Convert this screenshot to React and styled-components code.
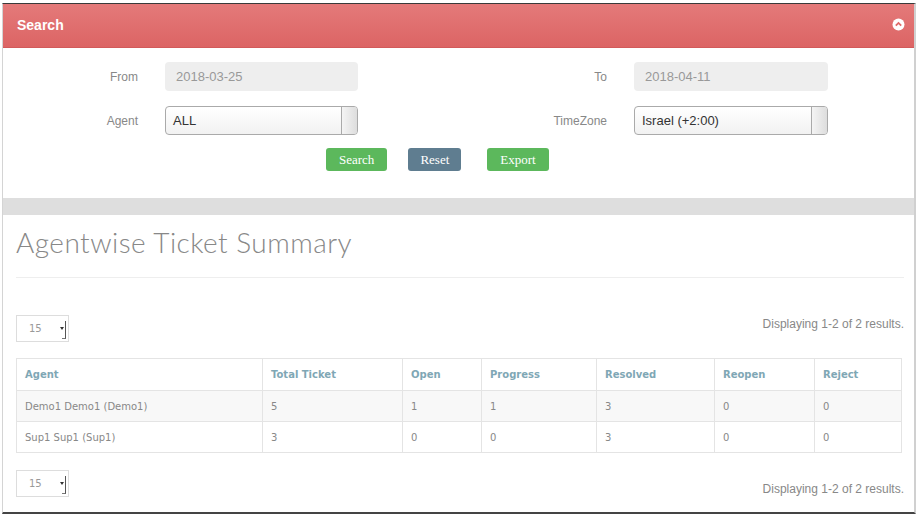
import React from 'react';
import styled, { createGlobalStyle } from 'styled-components';

const GlobalStyle = createGlobalStyle`
  html, body {
    margin: 0;
    padding: 0;
    background: #fff;
  }
  body {
    font-family: "Liberation Sans", Arial, sans-serif;
  }
`;

const rows = [
  { agent: 'Demo1 Demo1 (Demo1)', total: 5, open: 1, progress: 1, resolved: 3, reopen: 0, reject: 0 },
  { agent: 'Sup1 Sup1 (Sup1)', total: 3, open: 0, progress: 0, resolved: 3, reopen: 0, reject: 0 },
];

const columns = [
  { key: 'agent', label: 'Agent', width: 246 },
  { key: 'total', label: 'Total Ticket', width: 140 },
  { key: 'open', label: 'Open', width: 79 },
  { key: 'progress', label: 'Progress', width: 115 },
  { key: 'resolved', label: 'Resolved', width: 118 },
  { key: 'reopen', label: 'Reopen', width: 100 },
  { key: 'reject', label: 'Reject', width: 87 },
];

function PageSize () {
  return (
    <SizeBox>
      <SizeText>15</SizeText>
      <SizeArrow />
    </SizeBox>
  );
}

function Pager ({ bottom }) {
  return (
    <PagerRow $bottom={bottom}>
      <PageSize />
      <Summary>Displaying 1-2 of 2 results.</Summary>
    </PagerRow>
  );
}

export default function App () {
  return (
    <>
      <GlobalStyle />
      <Frame>
        <SearchPanel>
          <PanelHeader>
            <span>Search</span>
            <CollapseIcon>
              <svg width="13" height="13" viewBox="0 0 13 13">
                <circle cx="6.5" cy="6.5" r="6" fill="#fff" />
                <path d="M3.8 7.6 L6.5 4.9 L9.2 7.6" stroke="#e06a6a" strokeWidth="1.8" fill="none" />
              </svg>
            </CollapseIcon>
          </PanelHeader>
          <PanelBody>
            <FieldGrid>
              <Label>From</Label>
              <DateInput>2018-03-25</DateInput>
              <Label>To</Label>
              <DateInput>2018-04-11</DateInput>
              <span />
              <Label>Agent</Label>
              <Select>
                <span>ALL</span>
                <SelectButton />
              </Select>
              <Label>TimeZone</Label>
              <Select>
                <span>Israel (+2:00)</span>
                <SelectButton />
              </Select>
              <span />
            </FieldGrid>
            <ButtonRow>
              <Button $color="#5cb85c">Search</Button>
              <Button $color="#5f7d90" $pad="12px">Reset</Button>
              <Button $color="#5cb85c" $gap="5px">Export</Button>
            </ButtonRow>
          </PanelBody>
        </SearchPanel>
        <Band />
        <ResultPanel>
          <Title>Agentwise Ticket Summary</Title>
          <Rule />
          <Pager />
          <Table>
            <colgroup>
              {columns.map((c) => <col key={c.key} style={{ width: c.width }} />)}
            </colgroup>
            <thead>
              <tr>
                {columns.map((c) => <Th key={c.key}>{c.label}</Th>)}
              </tr>
            </thead>
            <tbody>
              {rows.map((r, i) => (
                <Tr key={r.agent} $striped={i % 2 === 0}>
                  {columns.map((c) => <Td key={c.key}>{r[c.key]}</Td>)}
                </Tr>
              ))}
            </tbody>
          </Table>
          <Pager bottom />
        </ResultPanel>
      </Frame>
    </>
  );
}

const Frame = styled.div`
  margin-top: 3px;
  width: 914px;
  height: 511px;
  border-top: 1px solid #3a3a3a;
  border-bottom: 2px solid #444;
  border-left: 1px solid #d4d4d4;
  border-right: 2px solid #d0d0d0;
  margin-left: 2px;
  display: flex;
  flex-direction: column;
  box-sizing: border-box;
`;

const SearchPanel = styled.div`
  flex-shrink: 0;
  background: #fff;
`;

const PanelHeader = styled.div`
  height: 41px;
  background: linear-gradient(#e47a7a, #dc6464);
  color: #fff;
  font-size: 14px;
  font-weight: bold;
  display: flex;
  align-items: center;
  justify-content: space-between;
  padding: 0 9px 2px 14px;
  border-bottom: 1px solid #d25a5a;
`;

const CollapseIcon = styled.span`
  display: flex;
  align-items: center;
`;

const PanelBody = styled.div`
  padding: 14px 0 27px 1px;
`;

const FieldGrid = styled.div`
  display: grid;
  grid-template-columns: 134px 193px 222px 194px 1fr;
  column-gap: 27px;
  row-gap: 15px;
  align-items: center;
`;

const Label = styled.span`
  text-align: right;
  color: #888;
  font-size: 12px;
`;

const DateInput = styled.div`
  height: 29px;
  box-sizing: border-box;
  background: #eee;
  border-radius: 4px;
  color: #999;
  font-size: 13px;
  display: flex;
  align-items: center;
  padding-left: 11px;
`;

const Select = styled.div`
  height: 29px;
  box-sizing: border-box;
  border: 1px solid #aaa;
  border-radius: 4px;
  background: linear-gradient(#fff, #f2f2f2);
  color: #333;
  font-size: 13px;
  display: flex;
  align-items: center;
  justify-content: space-between;
  padding-left: 7px;
  overflow: hidden;
`;

const SelectButton = styled.span`
  width: 15px;
  align-self: stretch;
  border-left: 1px solid #aaa;
  background: linear-gradient(to right, #f4f4f4, #ddd);
`;

const ButtonRow = styled.div`
  display: flex;
  gap: 21px;
  padding-left: 322px;
  margin-top: 13px;
`;

const Button = styled.button`
  height: 23px;
  padding: 0 ${(p) => p.$pad || '13px'};
  border: none;
  border-radius: 3px;
  background: ${(p) => p.$color};
  color: #fff;
  font-family: "Liberation Serif", "Times New Roman", serif;
  font-size: 13px;
  margin-left: ${(p) => p.$gap || '0'};
`;

const Band = styled.div`
  flex-shrink: 0;
  height: 17px;
  background: #dedede;
`;

const ResultPanel = styled.div`
  flex: 1;
  min-height: 0;
  overflow: hidden;
  padding: 0 10px 0 13px;
  background: #fff;
`;

const Title = styled.h1`
  margin: 12px 0 0;
  font-family: Lato, "Open Sans", sans-serif;
  font-weight: 300;
  font-size: 28px;
  letter-spacing: 0.45px;
  color: #888;
  line-height: 30px;
`;

const Rule = styled.hr`
  border: none;
  border-top: 1px solid #eee;
  margin: 20px 0 37px;
`;

const PagerRow = styled.div`
  display: flex;
  justify-content: space-between;
  align-items: ${(p) => (p.$bottom ? 'flex-end' : 'flex-start')};
  margin-bottom: 16px;
`;

const SizeBox = styled.div`
  width: 53px;
  height: 27px;
  box-sizing: border-box;
  border: 1px solid #ddd;
  position: relative;
  display: flex;
  align-items: center;
  padding-left: 12px;
`;

const SizeText = styled.span`
  font-family: "DejaVu Sans", sans-serif;
  font-size: 10px;
  color: #999;
`;

const SizeArrow = styled.span`
  position: absolute;
  right: 2px;
  bottom: 2px;
  width: 3px;
  height: 17px;
  border-right: 1.5px solid #555;
  border-bottom: 1.5px solid #777;
  &::before {
    content: '';
    position: absolute;
    left: -2px;
    top: 6px;
    border-left: 2.5px solid transparent;
    border-right: 2.5px solid transparent;
    border-top: 3px solid #333;
  }
`;

const Summary = styled.span`
  font-size: 12px;
  color: #888;
  margin: 2px 0 1px;
`;

const Table = styled.table`
  width: 885px;
  border-collapse: collapse;
  table-layout: fixed;
  margin-bottom: 17px;
  font-family: "DejaVu Sans", Verdana, sans-serif;
  font-size: 10px;
`;

const Th = styled.th`
  height: 31px;
  text-align: left;
  padding: 0 8px;
  color: #7fa7b5;
  font-weight: bold;
  border: 1px solid #e4e4e4;
`;

const Tr = styled.tr`
  background: ${(p) => (p.$striped ? '#f8f8f8' : '#fff')};
`;

const Td = styled.td`
  height: 30px;
  padding: 0 8px;
  color: #888;
  border: 1px solid #e4e4e4;
  white-space: nowrap;
`;
